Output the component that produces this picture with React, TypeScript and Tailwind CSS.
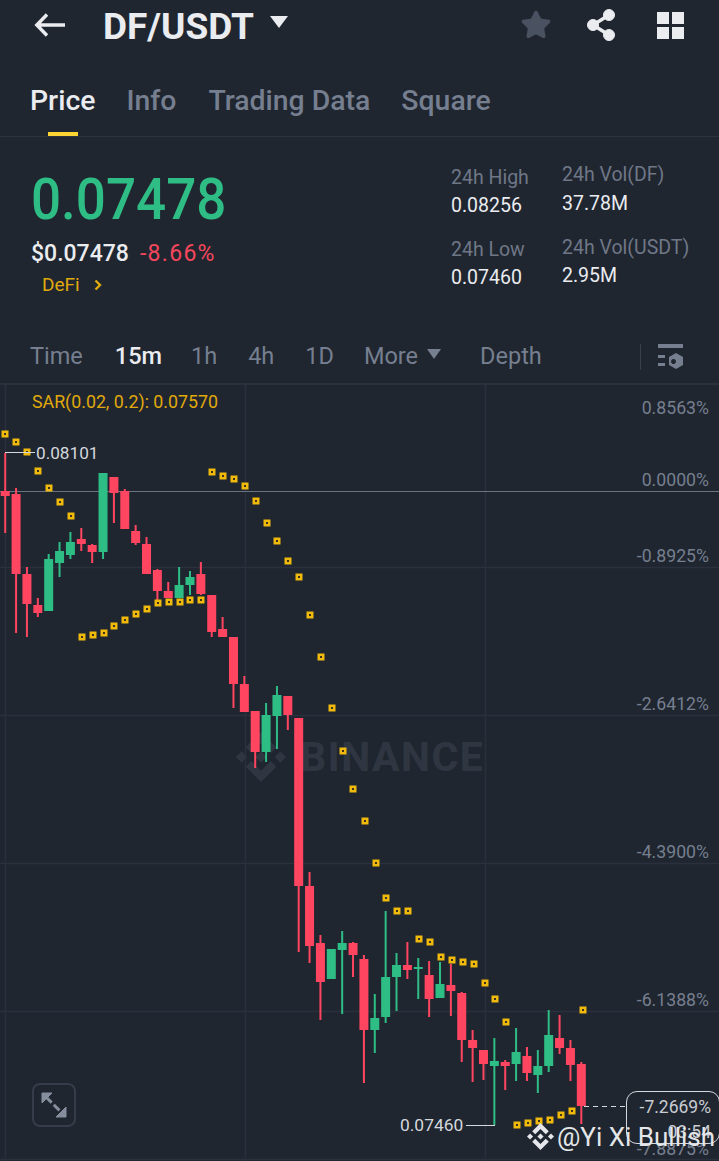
import { Star } from "lucide-react";

type Candle = [number, number, number, number, number];

// Each candle: wick top, wick bottom, body top, body bottom, 1 = green
const CANDLES: Candle[] = [
  [453, 533, 491, 496, 0], [488, 633, 494, 574, 0], [567, 637, 574, 604, 0], [598, 617, 605, 613, 0],
  [554, 611, 559, 611, 1], [542, 577, 551, 563, 1], [532, 559, 542, 555, 1], [528, 551, 539, 544, 0],
  [544, 563, 545, 552, 0], [473, 559, 473, 552, 1], [477, 523, 477, 493, 0], [489, 529, 491, 529, 0],
  [525, 545, 531, 543, 0], [537, 574, 544, 574, 0], [569, 600, 570, 591, 0], [582, 598, 591, 598, 0],
  [567, 598, 585, 598, 1], [571, 595, 577, 585, 1], [562, 595, 574, 594, 0], [595, 637, 595, 632, 0],
  [617, 637, 629, 637, 0], [637, 708, 637, 684, 0], [676, 712, 684, 712, 0], [711, 768, 711, 752, 0],
  [703, 762, 715, 752, 1], [686, 749, 695, 716, 1], [696, 730, 696, 715, 0], [718, 952, 718, 886, 0],
  [872, 963, 886, 946, 0], [935, 1020, 943, 982, 0], [949, 979, 949, 979, 1], [931, 1014, 943, 950, 1],
  [942, 977, 943, 955, 0], [955, 1083, 959, 1030, 0], [994, 1053, 1018, 1030, 1], [911, 1023, 977, 1017, 1],
  [953, 1011, 965, 977, 1], [942, 979, 965, 970, 0], [958, 999, 967, 969, 1], [961, 1017, 975, 999, 0],
  [962, 998, 984, 998, 1], [964, 1016, 985, 991, 0], [992, 1062, 993, 1040, 0], [1030, 1082, 1040, 1048, 0],
  [1050, 1080, 1050, 1064, 0], [1038, 1125, 1061, 1066, 1], [1060, 1090, 1062, 1066, 0], [1028, 1081, 1052, 1064, 1],
  [1047, 1081, 1056, 1073, 0], [1050, 1093, 1066, 1075, 1], [1010, 1072, 1035, 1066, 1], [1015, 1054, 1038, 1048, 0],
  [1040, 1081, 1048, 1065, 0], [1062, 1124, 1064, 1106, 0],
];

const SAR: [number, number][] = [
  [5, 434], [16, 442], [27, 452], [38, 471], [49, 488], [60, 502], [71, 516],
  [82, 637], [93, 635], [104, 633], [114, 626], [125, 620], [136, 614], [147, 609], [158, 603],
  [169, 602], [180, 602], [190, 600], [201, 600],
  [212, 472], [223, 476], [234, 479], [245, 486], [256, 501], [267, 523], [277, 541], [288, 561],
  [299, 577], [310, 615], [321, 657], [332, 708], [343, 751], [353, 789], [365, 821], [376, 863],
  [386, 898], [397, 911], [408, 911], [419, 939], [430, 942], [441, 957], [452, 960], [463, 962],
  [474, 964], [485, 983], [495, 999], [506, 1022], [583, 1010],
  [517, 1125], [528, 1123], [539, 1121], [550, 1120], [561, 1115], [572, 1111],
];

const AXIS: [string, number][] = [
  ["0.8563%", 408], ["0.0000%", 480], ["-0.8925%", 556], ["-2.6412%", 704],
  ["-4.3900%", 852], ["-6.1388%", 1000], ["-7.8875%", 1149],
];

const GRID_Y = [567, 715, 863, 1011, 1159];
const GRID_X = [5, 245, 485];
const CHART_TOP = 385;

function BinanceMark({ className }: { className?: string }) {
  return (
    <svg viewBox="0 0 32 32" className={className} fill="currentColor">
      <path d="M9.79 13.446L16 7.236l6.213 6.213 3.613-3.613L16 0 6.177 9.823zM0 16l3.613-3.613L7.226 16l-3.613 3.613zm9.79 2.554L16 24.764l6.213-6.213 3.614 3.612L16 32l-9.823-9.823-.005-.005zM24.774 16l3.613-3.613L32 16l-3.613 3.613zM19.665 16L16 12.333l-2.71 2.71-.312.311-.641.642L16 19.665 19.665 16z" />
    </svg>
  );
}

function Chart() {
  return (
    <svg width={719} height={776} viewBox={`0 ${CHART_TOP} 719 776`} className="absolute left-0 top-0">
      {GRID_Y.map((y) => (
        <line key={y} x1={0} x2={719} y1={y + 0.5} y2={y + 0.5} stroke="#2a313d" strokeWidth={1.5} />
      ))}
      {GRID_X.map((x) => (
        <line key={x} x1={x + 0.5} x2={x + 0.5} y1={CHART_TOP} y2={1161} stroke="#2a313d" strokeWidth={1.5} />
      ))}
      <line x1={0} x2={719} y1={491.5} y2={491.5} stroke="#6b7280" strokeWidth={1} />
      {CANDLES.map(([wt, wb, bt, bb, up], i) => {
        const cx = 5.2 + i * 10.87;
        const color = up ? "#2ebd85" : "#ff4560";
        return (
          <g key={i} fill={color}>
            <rect x={cx - 1} y={wt} width={2} height={wb - wt} />
            <rect x={cx - 4.5} y={bt} width={9} height={Math.max(bb - bt, 2)} />
          </g>
        );
      })}
      {SAR.map(([x, y], i) => (
        <g key={i}>
          <rect x={x - 3.5} y={y - 3.5} width={7} height={7} fill="#f0b90b" />
          <rect x={x - 1} y={y - 1} width={2} height={2} fill="#3a3320" />
        </g>
      ))}
      <path d="M5 452.5H35" stroke="#d5d8dd" strokeWidth={1} />
      <path d="M466 1125.5H495" stroke="#d5d8dd" strokeWidth={1} />
      <path d="M584 1106.5H626" stroke="#d5d8dd" strokeWidth={1} strokeDasharray="5 4" />
    </svg>
  );
}

export default function App() {
  return (
    <div className="w-[719px] h-[1161px] overflow-hidden bg-[#1f2630] font-[Roboto,sans-serif] flex flex-col">
      <div className="h-[137px] shrink-0 border-b border-[#2c333f] flex flex-col">
        <div className="h-[50px] flex items-center pl-[34px] pr-[35px]">
          <svg width={32} height={26} viewBox="0 0 32 26" fill="none" stroke="#eaecef" strokeWidth={3.4}>
            <path d="M31 13H3M13 2.5L2.8 13 13 23.5" />
          </svg>
          <span className="ml-[37px] mt-[2px] text-[37px] font-bold leading-none text-[#eaecef]">DF/USDT</span>
          <svg width={18} height={14} viewBox="0 0 18 14" className="ml-[16px] mb-[6px]" fill="#eaecef">
            <path d="M0 1h18L9 13z" />
          </svg>
          <Star className="ml-auto" size={32} fill="#4a5261" stroke="#4a5261" strokeWidth={1.5} />
          <svg width={30} height={32} viewBox="0 0 30 32" className="ml-[34px]" fill="#eaecef" stroke="#eaecef">
            <path d="M23 6L7 16l16 10" fill="none" strokeWidth={3.5} />
            <circle cx={23} cy={6} r={5.5} />
            <circle cx={7} cy={16} r={5.5} />
            <circle cx={23} cy={26} r={5.5} />
          </svg>
          <div className="ml-[41px] grid grid-cols-2 gap-[3px]">
            <div className="w-[12px] h-[12px] bg-[#eaecef]" />
            <div className="w-[12px] h-[12px] bg-[#eaecef]" />
            <div className="w-[12px] h-[12px] bg-[#eaecef]" />
            <div className="w-[12px] h-[12px] bg-[#eaecef]" />
          </div>
        </div>
        <div className="mt-auto flex items-start gap-[31px] pl-[30px] text-[28.4px] font-medium leading-none text-[#767f8f]">
          <div className="relative h-[49px] text-[#eaecef]">
            Price
            <div className="absolute left-[18px] bottom-0 w-[30px] h-[4px] bg-[#fcd535]" />
          </div>
          <span>Info</span>
          <span className="ml-[1px]">Trading Data</span>
          <span>Square</span>
        </div>
      </div>

      <div className="h-[198px] shrink-0 flex pl-[31px]">
        <div className="flex flex-col pt-[36px]">
          <span className="text-[53px] font-medium leading-none text-[#2ebd85] scale-y-[1.1]">0.07478</span>
          <div className="mt-[16px] flex gap-[11px] text-[23px] leading-none">
            <span className="font-medium text-[#eaecef]">$0.07478</span>
            <span className="text-[#f6465d] tracking-[1.3px]">-8.66%</span>
          </div>
          <div className="mt-[10px] ml-[11px] flex items-center gap-[14px] text-[19px] leading-none text-[#e0a90c]">
            DeFi
            <svg width={8} height={12} viewBox="0 0 8 12" fill="none" stroke="#e0a90c" strokeWidth={2.4}>
              <path d="M1.5 1.5L6 6l-4.5 4.5" />
            </svg>
          </div>
        </div>
        <div className="ml-auto flex">
          <div className="w-[111px] pt-[31px] flex flex-col text-[19.5px] leading-none">
            <span className="text-[#6f7787]">24h High</span>
            <span className="mt-[8px] text-[#eaecef]">0.08256</span>
            <span className="mt-[25px] text-[#6f7787]">24h Low</span>
            <span className="mt-[8px] text-[#eaecef]">0.07460</span>
          </div>
          <div className="w-[157px] pt-[28px] flex flex-col text-[19.5px] leading-none">
            <span className="text-[#6f7787]">24h Vol(DF)</span>
            <span className="mt-[9px] text-[#eaecef]">37.78M</span>
            <span className="mt-[25px] text-[#6f7787]">24h Vol(USDT)</span>
            <span className="mt-[8px] text-[#eaecef]">2.95M</span>
          </div>
        </div>
      </div>

      <div className="h-[50px] shrink-0 border-b-2 border-[#2a313d] flex items-center pl-[30px] pb-[5px] text-[23.5px] leading-none text-[#767f8f]">
        <span>Time</span>
        <span className="ml-[32px] font-medium text-[#eaecef]">15m</span>
        <span className="ml-[29px]">1h</span>
        <span className="ml-[31px]">4h</span>
        <span className="ml-[31px]">1D</span>
        <span className="ml-[30px]">More</span>
        <svg width={14} height={10} viewBox="0 0 14 10" className="ml-[9px] mb-[5px]" fill="#767f8f">
          <path d="M0 0h14L7 10z" />
        </svg>
        <span className="ml-[39px]">Depth</span>
        <div className="ml-[98px] w-px h-[26px] bg-[#3a414d]" />
        <svg width={26} height={28} viewBox="0 0 26 28" className="ml-[17px]" fill="#767f8f">
          <rect x={0} y={1} width={25} height={4} />
          <rect x={0} y={12} width={7} height={3} />
          <rect x={0} y={20} width={7} height={3} />
          <path fillRule="evenodd" d="M18 10l7 4v8l-7 4-7-4v-8zm0 8.5a2.5 2.5 0 100 .01z" />
        </svg>
      </div>

      <div className="relative flex-1">
        <div className="absolute left-[236px] top-[347px] flex items-center gap-[14px] text-[#2f3642]">
          <BinanceMark className="w-[50px] h-[50px]" />
          <span className="text-[41px] font-bold leading-none tracking-[1.5px]">BINANCE</span>
        </div>
        <Chart />
        <span className="absolute left-[32px] top-[8px] text-[17.8px] leading-none text-[#e0a90c]">SAR(0.02, 0.2): 0.07570</span>
        <span className="absolute left-[36px] top-[60px] text-[17.2px] leading-none text-[#d5d8dd]">0.08101</span>
        <span className="absolute left-[400px] top-[732px] text-[17.4px] leading-none text-[#d5d8dd]">0.07460</span>
        {AXIS.map(([label, y]) => (
          <span
            key={label}
            className="absolute right-[10px] text-[17.7px] leading-none text-[#767f8f]"
            style={{ top: y - CHART_TOP - 8 }}
          >
            {label}
          </span>
        ))}
        <div className="absolute left-[32px] top-[698px] w-[44px] h-[44px] rounded-lg border-2 border-[#363d4a] flex items-center justify-center">
          <svg width={26} height={26} viewBox="0 0 26 26" fill="#848e9c" stroke="#848e9c">
            <path d="M1 1h10L1 11z" />
            <path d="M25 25H15L25 15z" />
            <path d="M5 5l16 16" strokeWidth={3} strokeDasharray="8 3" fill="none" />
          </svg>
        </div>
        <div className="absolute left-[626px] top-[706px] w-[94px] h-[53px] rounded-[11px] border border-[#d5d8dd] bg-[#1f2630] flex flex-col items-end pr-[8px] pt-[7px] text-[17.5px] leading-none text-[#c9ccd2]">
          <span>-7.2669%</span>
          <span className="mt-[7px]">03:54</span>
        </div>
        <div className="absolute left-[527px] top-[738px] flex items-center gap-[3px] whitespace-nowrap text-[#e4e6e9]">
          <BinanceMark className="w-[27px] h-[27px]" />
          <span className="text-[26px] leading-none">@Yi Xi Bullish</span>
        </div>
      </div>
    </div>
  );
}
